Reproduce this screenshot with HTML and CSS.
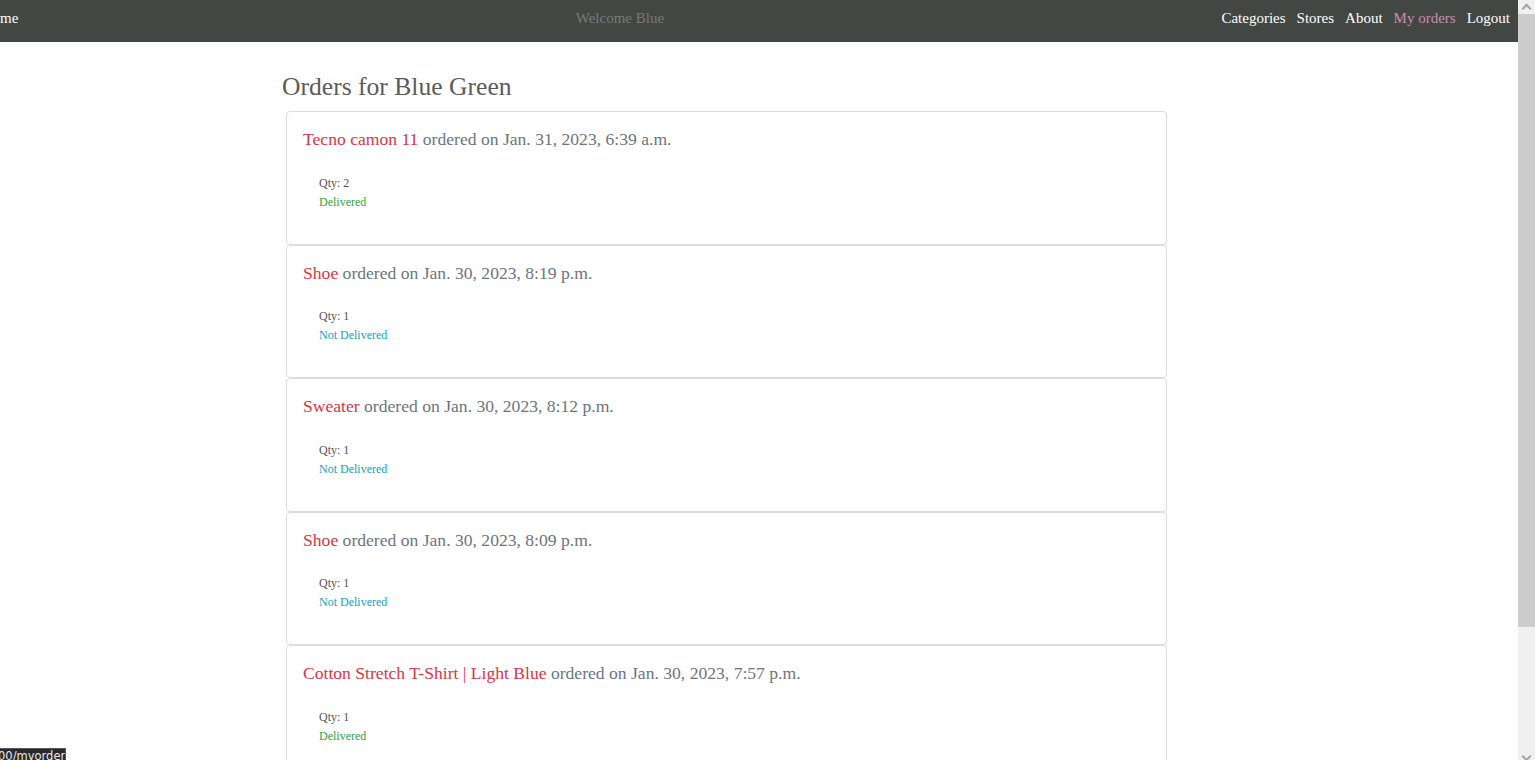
FILE: index.html
```html
<!DOCTYPE html>
<html>
<head>
<meta charset="utf-8">
<title>My orders</title>
<link rel="stylesheet" href="styles.css">
</head>
<body>
<div class="page">
  <nav class="navbar">
    <a class="brand" href="#">Home</a>
    <span class="welcome">Welcome Blue</span>
    <ul class="links">
      <li><a href="#">Categories</a></li>
      <li><a href="#">Stores</a></li>
      <li><a href="#">About</a></li>
      <li><a href="#" class="active">My orders</a></li>
      <li><a href="#">Logout</a></li>
    </ul>
  </nav>
  <main class="content">
    <h3 class="heading">Orders for Blue Green</h3>
    <div class="orders">
      <div class="card">
        <h5 class="title"><span class="product">Tecno camon 11</span> ordered on Jan. 31, 2023, 6:39 a.m.</h5>
        <div class="details">
          <div class="qty">Qty: 2</div>
          <div class="status delivered">Delivered</div>
        </div>
      </div>
      <div class="card">
        <h5 class="title"><span class="product">Shoe</span> ordered on Jan. 30, 2023, 8:19 p.m.</h5>
        <div class="details">
          <div class="qty">Qty: 1</div>
          <div class="status pending">Not Delivered</div>
        </div>
      </div>
      <div class="card">
        <h5 class="title"><span class="product">Sweater</span> ordered on Jan. 30, 2023, 8:12 p.m.</h5>
        <div class="details">
          <div class="qty">Qty: 1</div>
          <div class="status pending">Not Delivered</div>
        </div>
      </div>
      <div class="card">
        <h5 class="title"><span class="product">Shoe</span> ordered on Jan. 30, 2023, 8:09 p.m.</h5>
        <div class="details">
          <div class="qty">Qty: 1</div>
          <div class="status pending">Not Delivered</div>
        </div>
      </div>
      <div class="card">
        <h5 class="title"><span class="product">Cotton Stretch T-Shirt | Light Blue</span> ordered on Jan. 30, 2023, 7:57 p.m.</h5>
        <div class="details">
          <div class="qty">Qty: 1</div>
          <div class="status delivered">Delivered</div>
        </div>
      </div>
    </div>
  </main>
  <div class="status-bubble">00/myorder</div>
</div>
<div class="scrollbar">
  <div class="arrow up"></div>
  <div class="thumb"></div>
  <div class="track"></div>
  <div class="arrow down"></div>
</div>
</body>
</html>
```
FILE: styles.css
```css
html, body {
  margin: 0;
  padding: 0;
  height: 100%;
  overflow: hidden;
}
body {
  display: flex;
  background: #fff;
  font-family: "Liberation Serif", "Times New Roman", serif;
}
.page {
  flex: 1;
  position: relative;
  overflow: hidden;
  min-width: 0;
}
.navbar {
  height: 42px;
  background: #434744;
  display: flex;
  align-items: flex-start;
  justify-content: space-between;
  padding: 8px 8px 0 0;
  font-size: 15px;
  line-height: 20px;
  box-sizing: border-box;
}
.brand {
  color: #fff;
  text-decoration: none;
  margin-left: -18.3px;
}
.welcome {
  color: #787a78;
}
.links {
  list-style: none;
  margin: 0;
  padding: 0;
  display: flex;
  gap: 11px;
}
.links a {
  color: #fff;
  text-decoration: none;
}
.links a.active {
  color: #c98fae;
}
.content {
  margin-left: 282px;
  width: 885px;
}
.heading {
  margin: 29.5px 0 8.8px 0;
  font-size: 25.6px;
  font-weight: normal;
  line-height: 1.2;
  color: #5b5b5b;
}
.orders {
  display: flex;
  flex-direction: column;
  margin-left: 4px;
  width: 881px;
}
.card {
  border: 1px solid #dcdcdc;
  border-radius: 4px;
  padding: 17px 16px 16px 16px;
  box-sizing: border-box;
  height: 133.5px;
  flex-shrink: 0;
}
.title {
  margin: 0;
  font-size: 17.6px;
  font-weight: normal;
  line-height: 21px;
  color: #6c757d;
  white-space: nowrap;
}
.product {
  color: #dc3545;
}
.details {
  margin-top: 23.5px;
  padding-left: 16px;
  font-size: 12px;
  line-height: 19px;
}
.qty {
  color: #555;
}
.delivered {
  color: #28a745;
}
.pending {
  color: #17a2b8;
}
.status-bubble {
  position: absolute;
  left: -1px;
  bottom: -4px;
  height: 16px;
  width: 67px;
  box-sizing: border-box;
  background: #292a2d;
  border: 1px solid #5a5a5a;
  color: #e8e8e8;
  font-family: "DejaVu Sans", "Liberation Sans", sans-serif;
  font-size: 11.5px;
  line-height: 13px;
  padding-top: 1px;
  overflow: hidden;
  white-space: nowrap;
  text-indent: -2px;
}
.scrollbar {
  width: 17px;
  flex-shrink: 0;
  display: flex;
  flex-direction: column;
  background: #f0f0f0;
}
.arrow {
  height: 14px;
  flex-shrink: 0;
  position: relative;
  background: #f0f0f0;
}
.arrow::before {
  content: "";
  position: absolute;
  left: 5px;
  width: 5px;
  height: 5px;
  border-left: 2px solid #a3a3a3;
  border-top: 2px solid #a3a3a3;
}
.arrow.up::before {
  top: 5px;
  transform: rotate(45deg);
}
.arrow.down {
  height: 15px;
}
.arrow.down::before {
  top: 8px;
  transform: rotate(225deg);
}
.thumb {
  height: 613px;
  background: #cdcdcd;
  flex-shrink: 0;
}
.track {
  flex: 1;
  background: #f0f0f0;
}
```
